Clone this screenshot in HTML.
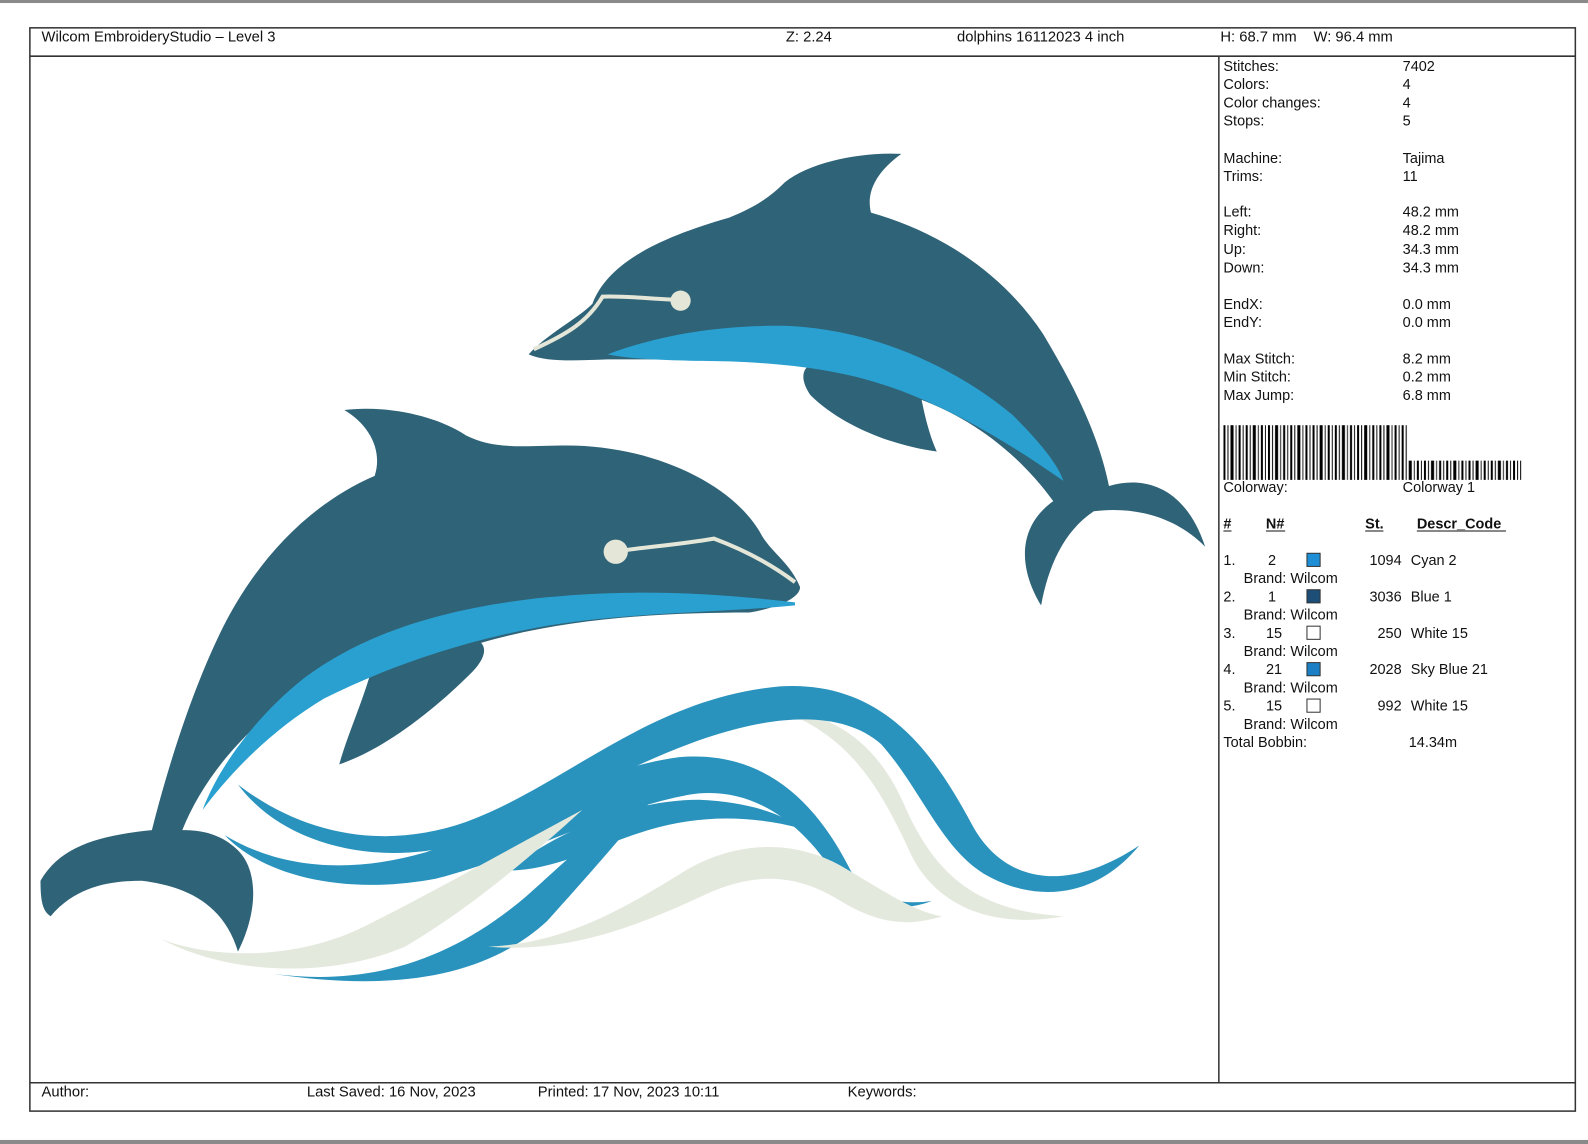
<!DOCTYPE html>
<html><head><meta charset="utf-8"><style>
html,body{margin:0;padding:0;background:#fff;overflow:hidden}
svg{display:block}
text{font-family:"Liberation Sans",Arial,sans-serif;fill:#111}
</style></head><body>
<svg width="1588" height="1144" viewBox="0 0 1568 1130" preserveAspectRatio="none" xmlns="http://www.w3.org/2000/svg">
<rect x="0" y="0" width="1568" height="3" fill="#8a8a8a"/>
<rect x="0" y="1126" width="1568" height="4" fill="#8a8a8a"/>
<rect x="29.5" y="27.5" width="1526" height="1070" fill="none" stroke="#333" stroke-width="1.5"/>
<line x1="29" y1="55.5" x2="1556" y2="55.5" stroke="#333" stroke-width="1.5"/>
<line x1="29" y1="1069.5" x2="1556" y2="1069.5" stroke="#333" stroke-width="1.5"/>
<line x1="1203.5" y1="55" x2="1203.5" y2="1069" stroke="#333" stroke-width="1.5"/>

<g font-size="14.6">
<text x="41" y="41">Wilcom EmbroideryStudio – Level 3</text>
<text x="776" y="41">Z: 2.24</text>
<text x="945" y="41">dolphins 16112023 4 inch</text>
<text x="1205" y="41">H: 68.7 mm</text><text x="1297" y="41">W: 96.4 mm</text>
<text x="41" y="1083">Author:</text>
<text x="303" y="1083">Last Saved: 16 Nov, 2023</text>
<text x="531" y="1083">Printed: 17 Nov, 2023 10:11</text>
<text x="837" y="1083">Keywords:</text>
</g>

<g font-size="14.3">
<text x="1208" y="70">Stitches:</text><text x="1385" y="70">7402</text>
<text x="1208" y="88">Colors:</text><text x="1385" y="88">4</text>
<text x="1208" y="106">Color changes:</text><text x="1385" y="106">4</text>
<text x="1208" y="124">Stops:</text><text x="1385" y="124">5</text>
<text x="1208" y="161">Machine:</text><text x="1385" y="161">Tajima</text>
<text x="1208" y="179">Trims:</text><text x="1385" y="179">11</text>
<text x="1208" y="214">Left:</text><text x="1385" y="214">48.2 mm</text>
<text x="1208" y="232">Right:</text><text x="1385" y="232">48.2 mm</text>
<text x="1208" y="251">Up:</text><text x="1385" y="251">34.3 mm</text>
<text x="1208" y="269">Down:</text><text x="1385" y="269">34.3 mm</text>
<text x="1208" y="305">EndX:</text><text x="1385" y="305">0.0 mm</text>
<text x="1208" y="323">EndY:</text><text x="1385" y="323">0.0 mm</text>
<text x="1208" y="359">Max Stitch:</text><text x="1385" y="359">8.2 mm</text>
<text x="1208" y="377">Min Stitch:</text><text x="1385" y="377">0.2 mm</text>
<text x="1208" y="395">Max Jump:</text><text x="1385" y="395">6.8 mm</text>
</g>
<defs>
<pattern id="bars" x="1208" y="0" width="22" height="10" patternUnits="userSpaceOnUse">
<rect x="0" y="0" width="2" height="10" fill="#000"/><rect x="4" y="0" width="1" height="10" fill="#000"/>
<rect x="7" y="0" width="3" height="10" fill="#000"/><rect x="12" y="0" width="1" height="10" fill="#222"/>
<rect x="15" y="0" width="2" height="10" fill="#000"/><rect x="19" y="0" width="1" height="10" fill="#111"/>
</pattern>
</defs>
<rect x="1208" y="420" width="182" height="54" fill="url(#bars)"/>
<rect x="1390" y="455" width="112" height="19" fill="url(#bars)"/>
<g font-size="14.3">
<text x="1208" y="486">Colorway:</text><text x="1385" y="486">Colorway 1</text>
<g font-weight="bold">
<text x="1208" y="522">#</text><text x="1250" y="522">N#</text><text x="1348" y="522">St.</text><text x="1399" y="522">Descr_Code</text>
</g>
<line x1="1208" y1="524.5" x2="1216" y2="524.5" stroke="#111"/><line x1="1250" y1="524.5" x2="1269" y2="524.5" stroke="#111"/>
<line x1="1348" y1="524.5" x2="1366" y2="524.5" stroke="#111"/><line x1="1399" y1="524.5" x2="1487" y2="524.5" stroke="#111"/>
<text x="1208" y="558">1.</text><text x="1256" y="558" text-anchor="middle">2</text><rect x="1290.5" y="546.5" width="13" height="13" fill="#1e8fd6" stroke="#333"/><text x="1384" y="558" text-anchor="end">1094</text><text x="1393" y="558">Cyan 2</text>
<text x="1228" y="576">Brand: Wilcom</text>
<text x="1208" y="594">2.</text><text x="1256" y="594" text-anchor="middle">1</text><rect x="1290.5" y="582.5" width="13" height="13" fill="#1d4e78" stroke="#333"/><text x="1384" y="594" text-anchor="end">3036</text><text x="1393" y="594">Blue 1</text>
<text x="1228" y="612">Brand: Wilcom</text>
<text x="1208" y="630">3.</text><text x="1258" y="630" text-anchor="middle">15</text><rect x="1290.5" y="618.5" width="13" height="13" fill="#fff" stroke="#333"/><text x="1384" y="630" text-anchor="end">250</text><text x="1393" y="630">White 15</text>
<text x="1228" y="648">Brand: Wilcom</text>
<text x="1208" y="666">4.</text><text x="1258" y="666" text-anchor="middle">21</text><rect x="1290.5" y="654.5" width="13" height="13" fill="#1a7fc4" stroke="#333"/><text x="1384" y="666" text-anchor="end">2028</text><text x="1393" y="666">Sky Blue 21</text>
<text x="1228" y="684">Brand: Wilcom</text>
<text x="1208" y="702">5.</text><text x="1258" y="702" text-anchor="middle">15</text><rect x="1290.5" y="690.5" width="13" height="13" fill="#fff" stroke="#333"/><text x="1384" y="702" text-anchor="end">992</text><text x="1393" y="702">White 15</text>
<text x="1228" y="720">Brand: Wilcom</text>
<text x="1208" y="738">Total Bobbin:</text><text x="1391" y="738">14.34m</text>
</g>

<!-- upper dolphin -->
<g>
<path d="M522,350 C540,330 570,315 585,300 C600,260 650,235 720,215 C745,205 760,195 775,180 C800,160 850,150 890,152 C865,170 855,190 860,210 C930,230 990,270 1030,330 C1060,380 1085,430 1095,480 C1130,470 1170,480 1190,540 C1160,510 1120,500 1080,505 C1050,525 1035,560 1028,598 C1005,560 1005,520 1040,495 C1000,440 950,410 910,395 C915,420 920,435 925,446 C880,440 830,420 800,390 C790,375 792,365 800,360 C720,355 650,355 600,355 C570,356 540,358 522,350 Z" fill="#2f6378"/>
<path d="M600,350 C640,335 700,320 780,322 C860,326 940,360 1000,410 C1030,440 1045,460 1050,475 C1000,440 950,410 900,390 C850,370 800,360 720,357 C670,356 630,356 600,350 Z" fill="#2aa0d0"/>
<path d="M527,345 C560,330 580,318 595,293 C620,292 650,296 670,296" fill="none" stroke="#e4e6d8" stroke-width="4"/>
<circle cx="672" cy="297" r="10" fill="#e4e6d8"/>
</g>
<!-- lower dolphin -->
<g>
<path d="M790,580 C780,555 760,545 750,525 C720,475 640,440 560,440 C520,440 490,445 460,430 C430,410 380,400 340,405 C365,420 378,445 370,470 C300,500 250,560 220,620 C190,680 165,760 150,820 C100,825 60,835 40,870 C40,890 42,900 50,905 C75,875 110,870 140,870 C180,875 220,890 235,940 C255,900 255,860 235,840 C215,820 190,820 180,820 C200,770 240,720 300,680 C330,665 360,655 370,650 C360,690 345,720 335,755 C380,740 430,700 465,665 C480,650 480,640 475,635 C560,610 660,605 740,605 C770,600 790,590 790,580 Z" fill="#2f6378"/>
<path d="M785,595 C700,585 620,582 540,590 C440,600 360,625 300,670 C250,710 215,760 200,800 C230,760 270,720 320,690 C380,660 450,635 530,620 C610,605 700,606 785,598 Z" fill="#2aa0d0"/>
<path d="M605,545 C640,540 670,538 705,532 C740,545 765,560 785,575" fill="none" stroke="#e4e6d8" stroke-width="4"/>
<circle cx="608" cy="545" r="12" fill="#e4e6d8"/>
</g>
<!-- waves -->
<g fill="#e4e9de">
<path d="M765,700 C830,705 870,740 895,800 C925,865 965,900 1050,905 C980,918 925,895 900,845 C870,780 840,725 765,700 Z"/>
</g>
<g fill="#2a93bd">
<path d="M235,775 C300,825 380,840 460,812 C560,775 640,690 770,678 C870,672 920,740 960,815 C990,870 1050,885 1125,835 C1080,890 1020,890 975,865 C930,840 910,780 870,735 C830,700 760,705 680,735 C600,765 520,815 450,835 C370,855 280,835 235,775 Z"/>
<path d="M222,825 C280,860 350,862 420,842 C500,815 580,760 670,748 C760,740 810,800 840,860 C855,885 885,895 920,890 C880,905 845,890 825,865 C790,810 740,775 680,785 C600,800 520,845 430,868 C340,885 260,865 222,825 Z"/>
<path d="M500,860 C560,815 630,790 690,790 C740,792 775,805 790,818 C740,805 690,805 640,820 C590,835 550,860 500,860 Z"/>
<path d="M270,962 C370,975 450,945 520,885 C565,845 605,805 650,782 C620,820 585,860 540,910 C480,965 390,980 270,962 Z"/>
</g>
<g fill="#e4e9de">
<path d="M160,928 C220,950 300,945 360,915 C430,880 500,840 575,800 C520,850 460,900 400,935 C330,965 230,965 160,928 Z"/>
<path d="M482,935 C560,932 620,895 680,858 C730,830 785,830 830,855 C870,878 900,900 930,905 C890,918 860,908 830,890 C790,865 750,860 700,882 C630,915 560,942 482,935 Z"/>
</g>
</svg>
</body></html>
